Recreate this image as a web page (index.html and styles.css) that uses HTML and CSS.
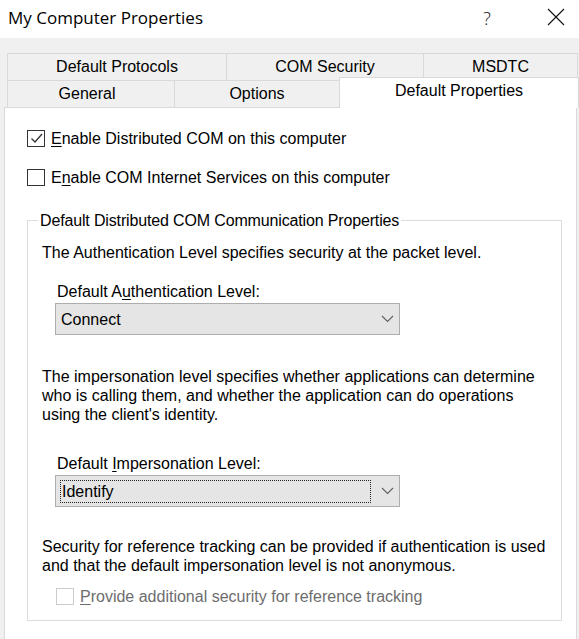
FILE: index.html
```html
<!DOCTYPE html>
<html lang="en">
<head>
<meta charset="utf-8">
<title>My Computer Properties</title>
<link rel="stylesheet" href="styles.css">
</head>
<body>
<div class="window">
  <header class="titlebar">
    <span class="title">My Computer Properties</span>
    <span class="tb-btn help">?</span>
    <span class="tb-btn close">
      <svg width="18" height="18" viewBox="0 0 18 18"><path d="M1 1 L17 17 M17 1 L1 17" stroke="#111" stroke-width="1.1" fill="none"/></svg>
    </span>
  </header>

  <div class="tabs">
    <div class="tab-row">
      <div class="tab t-protocols">Default Protocols</div>
      <div class="tab t-security">COM Security</div>
      <div class="tab t-msdtc">MSDTC</div>
    </div>
    <div class="tab-row row-front">
      <div class="tab t-general">General</div>
      <div class="tab t-options">Options</div>
      <div class="tab t-props selected">Default Properties</div>
    </div>
  </div>

  <div class="panel">
    <div class="check-row first">
      <span class="checkbox checked">
        <svg width="15" height="15" viewBox="0 0 15 15"><polyline points="2.5,7.5 6,11 13,3" fill="none" stroke="#333" stroke-width="1.3"/></svg>
      </span>
      <span class="check-label"><u>E</u>nable Distributed COM on this computer</span>
    </div>
    <div class="check-row second">
      <span class="checkbox"></span>
      <span class="check-label">E<u>n</u>able COM Internet Services on this computer</span>
    </div>

    <fieldset class="group">
      <legend>Default Distributed COM Communication Properties</legend>
      <p class="desc">The Authentication Level specifies security at the packet level.</p>
      <div class="field-label">Default A<u>u</u>thentication Level:</div>
      <div class="combo">
        <span class="combo-text">Connect</span>
        <svg class="chev" width="13" height="8" viewBox="0 0 13 8"><polyline points="1,1 6.5,6.5 12,1" fill="none" stroke="#606060" stroke-width="1.1"/></svg>
      </div>

      <p class="desc gap-lg">The impersonation level specifies whether applications can determine who is calling them, and whether the application can do operations using the client's identity.</p>
      <div class="field-label gap-md"><span>Default <u>I</u>mpersonation Level:</span></div>
      <div class="combo">
        <span class="combo-text focus">Identify</span>
        <svg class="chev" width="13" height="8" viewBox="0 0 13 8"><polyline points="1,1 6.5,6.5 12,1" fill="none" stroke="#606060" stroke-width="1.1"/></svg>
      </div>

      <p class="desc gap-md">Security for reference tracking can be provided if authentication is used and that the default impersonation level is not anonymous.</p>
      <div class="check-row disabled">
        <span class="checkbox"></span>
        <span class="check-label"><u>P</u>rovide additional security for reference tracking</span>
      </div>
    </fieldset>
  </div>
</div>
</body>
</html>
```

FILE: styles.css
```css
* { box-sizing: border-box; }

html, body {
  margin: 0;
  padding: 0;
  width: 579px;
  height: 639px;
  overflow: hidden;
}

body {
  background: #f0f0f0;
  font-family: "Liberation Sans", Arial, sans-serif;
  font-size: 16px;
  color: #000;
}

.titlebar {
  height: 38px;
  background: #fff;
  display: flex;
  align-items: center;
}

.title {
  flex: 1;
  padding-left: 8px;
  padding-bottom: 3px;
  font-family: "Open Sans", "Noto Sans", sans-serif;
  font-size: 17px;
  color: #000;
}

.tb-btn {
  width: 46px;
  height: 38px;
  display: flex;
  align-items: center;
  justify-content: center;
}

.help {
  font-family: "Open Sans", "Noto Sans", sans-serif;
  font-size: 18px;
  font-weight: 300;
  color: #111;
  margin-right: 23px;
  padding-bottom: 3px;
}

.close {
  padding-bottom: 4px;
}

.tabs {
  padding: 15px 0 0 7px;
}

.tab-row {
  display: flex;
  height: 27px;
}

.row-front {
  align-items: flex-end;
}

.tab {
  height: 27px;
  border: 1px solid #d9d9d9;
  border-bottom: none;
  background: #f0f0f0;
  display: flex;
  align-items: center;
  justify-content: center;
  line-height: 1;
  margin-left: -1px;
}

.tab:first-child { margin-left: 0; }

.t-protocols { width: 220px; }
.t-security { width: 198px; }
.t-msdtc { width: 155px; }
.t-general { width: 168px; padding-right: 8px; }
.t-options { width: 166px; }

.tab.selected {
  width: 240px;
  height: 31px;
  margin-top: -3px;
  margin-bottom: -1px;
  background: #fff;
  position: relative;
  z-index: 1;
  padding-bottom: 4px;
  border-color: #d9d9d9;
}

.panel {
  margin-left: 4px;
  width: 573px;
  height: 540px;
  background: #fff;
  border: 1px solid #d9d9d9;
  padding: 22px 14px 0 22px;
}

.check-row {
  display: flex;
  align-items: center;
  height: 17px;
}

.check-row.second { margin-top: 22px; }

.checkbox {
  width: 18px;
  height: 17px;
  border: 1px solid #333;
  background: #fff;
  display: flex;
  align-items: center;
  justify-content: center;
  flex: none;
}

.check-label {
  margin-left: 6px;
  line-height: 17px;
  white-space: nowrap;
}

u {
  text-decoration: underline;
  text-underline-offset: 2px;
}

.group {
  margin: 25px 0 0 0;
  border: 1px solid #dcdcdc;
  padding: 13px 14px 15px 14px;
  min-width: 0;
}

.group legend {
  padding: 0 2px;
  margin-left: -4px;
  line-height: 19px;
  letter-spacing: -0.15px;
}

.desc {
  margin: 0;
  line-height: 19px;
}

.gap-lg { margin-top: 32px; }
.gap-md { margin-top: 30px; }

.field-label {
  margin-top: 20px;
  padding-left: 15px;
  line-height: 19px;
}

.field-label.gap-md { margin-top: 30px; }

.combo {
  margin: 2px 0 0 13px;
  width: 345px;
  height: 32px;
  background: #e5e5e5;
  border: 1px solid #adadad;
  display: flex;
  align-items: center;
  padding: 0 0 0 4px;
}

.combo-text {
  width: 311px;
  height: 23px;
  border: 1px dotted transparent;
  display: flex;
  align-items: center;
  line-height: 1;
  padding-top: 2px;
}

.combo-text.focus {
  border-color: #222;
  padding-left: 1px;
}

.chev {
  margin-left: 10px;
}

.check-row.disabled {
  margin-top: 13px;
  margin-left: 14px;
}

.check-row.disabled .checkbox {
  border-color: #cccccc;
}

.check-row.disabled .check-label {
  color: #6d6d6d;
  margin-left: 6px;
}
```
